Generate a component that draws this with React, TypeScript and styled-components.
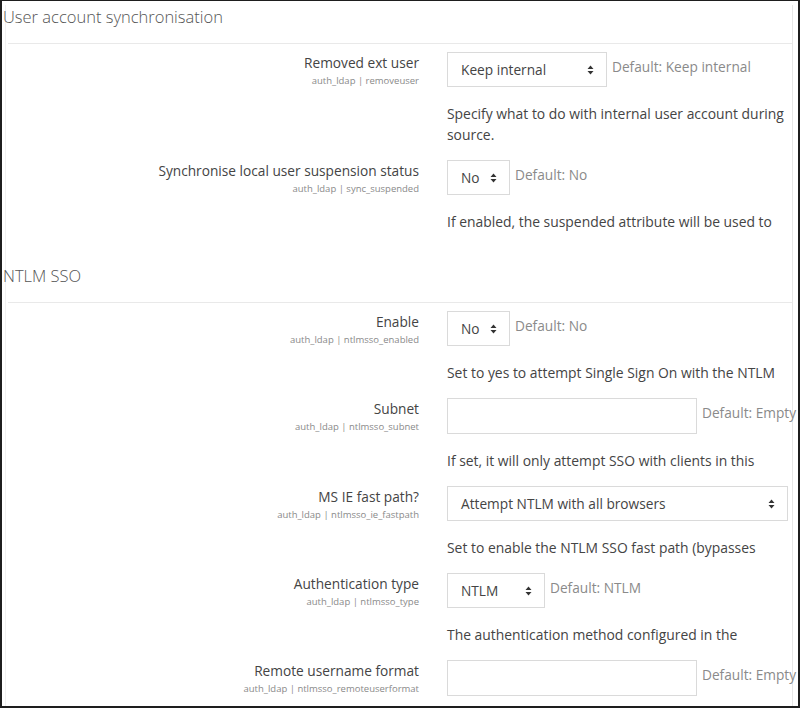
import * as React from 'react'
import styled, { createGlobalStyle } from 'styled-components'

const GlobalStyle = createGlobalStyle`
	html, body {
		margin: 0;
		padding: 0;
		background: #fff;
	}
	body {
		font-family: "Open Sans", "Liberation Sans", sans-serif;
		color: #373a3c;
	}
`

const Frame = styled.div`
	box-sizing: border-box;
	width: 800px;
	height: 708px;
	overflow: hidden;
	border: 2px solid #1e1e1e;
	border-top-width: 1px;
	background: #fff;
`

const Page = styled.div`
	box-sizing: border-box;
	height: 100%;
	margin: 0 5px 0 3px;
	border-left: 1px solid #f1f1f1;
	border-right: 1px solid #e6e6e6;
`

const Heading = styled.h3<{ $first?: boolean }>`
	margin: ${(p) => (p.$first ? '4px' : '17px')} 0 0 -3px;
	padding: 0 0 14px;
	font-size: 16.5px;
	font-weight: 300;
	line-height: 24px;
	color: #555;
	white-space: nowrap;
`

const Rule = styled.div`
	height: 1px;
	margin: 0 0 8px 2px;
	background: #e9e9e9;
`

const Setting = styled.div`
	display: grid;
	grid-template-columns: 413px 1fr;
	column-gap: 28px;
	padding-bottom: 15px;
`

const LabelCell = styled.div`
	text-align: right;
	padding-top: 1px;
`

const Label = styled.div`
	font-size: 13.7px;
	line-height: 20px;
	color: #444;
	white-space: nowrap;
`

const Key = styled.div`
	font-size: 9.5px;
	line-height: 15px;
	color: #8a8a8a;
	white-space: nowrap;
`

const ControlCell = styled.div`
	min-width: 0;
	padding-right: 4px;
`

const ControlLine = styled.div`
	display: flex;
	align-items: flex-start;
	white-space: nowrap;
`

const SelectBox = styled.div<{ $width: number }>`
	box-sizing: border-box;
	flex: none;
	display: flex;
	align-items: center;
	justify-content: space-between;
	width: ${(p) => p.$width}px;
	height: 35px;
	padding: 0 12px 0 13px;
	border: 1px solid #dadada;
	font-size: 13.7px;
	color: #444;
`

const TextBox = styled.div`
	box-sizing: border-box;
	flex: none;
	width: 250px;
	height: 36px;
	border: 1px solid #dadada;
`

const DefaultNote = styled.span`
	margin-left: 5px;
	padding-top: 5px;
	font-size: 13.7px;
	line-height: 20px;
	color: #8a8a8a;
`

const Description = styled.div`
	margin-top: 16px;
	font-size: 13.9px;
	line-height: 21px;
	color: #444;
	white-space: pre-line;
`

const Arrows = () => (
	<svg width="7" height="10" viewBox="0 0 7 10">
		<path d="M3.5 0.5 L6.5 4 H0.5 Z M3.5 9.5 L6.5 6 H0.5 Z" fill="#333" />
	</svg>
)

type Control =
	| { kind: 'select'; value: string; width: number }
	| { kind: 'text' }

interface Item {
	label: string
	name: string
	control: Control
	note?: string
	description: string
}

const userSync: Item[] = [
	{
		label: 'Removed ext user',
		name: 'removeuser',
		control: { kind: 'select', value: 'Keep internal', width: 160 },
		note: 'Default: Keep internal',
		description: 'Specify what to do with internal user account during\nsource.',
	},
	{
		label: 'Synchronise local user suspension status',
		name: 'sync_suspended',
		control: { kind: 'select', value: 'No', width: 63 },
		note: 'Default: No',
		description: 'If enabled, the suspended attribute will be used to',
	},
]

const ntlm: Item[] = [
	{
		label: 'Enable',
		name: 'ntlmsso_enabled',
		control: { kind: 'select', value: 'No', width: 63 },
		note: 'Default: No',
		description: 'Set to yes to attempt Single Sign On with the NTLM',
	},
	{
		label: 'Subnet',
		name: 'ntlmsso_subnet',
		control: { kind: 'text' },
		note: 'Default: Empty',
		description: 'If set, it will only attempt SSO with clients in this',
	},
	{
		label: 'MS IE fast path?',
		name: 'ntlmsso_ie_fastpath',
		control: { kind: 'select', value: 'Attempt NTLM with all browsers', width: 341 },
		description: 'Set to enable the NTLM SSO fast path (bypasses',
	},
	{
		label: 'Authentication type',
		name: 'ntlmsso_type',
		control: { kind: 'select', value: 'NTLM', width: 98 },
		note: 'Default: NTLM',
		description: 'The authentication method configured in the',
	},
	{
		label: 'Remote username format',
		name: 'ntlmsso_remoteuserformat',
		control: { kind: 'text' },
		note: 'Default: Empty',
		description: '',
	},
]

const SettingRow: React.FC<{ item: Item }> = ({ item }) => (
	<Setting>
		<LabelCell>
			<Label>{item.label}</Label>
			<Key>auth_ldap | {item.name}</Key>
		</LabelCell>
		<ControlCell>
			<ControlLine>
				{item.control.kind === 'select' ? (
					<SelectBox $width={item.control.width}>
						<span>{item.control.value}</span>
						<Arrows />
					</SelectBox>
				) : (
					<TextBox />
				)}
				{item.note && <DefaultNote>{item.note}</DefaultNote>}
			</ControlLine>
			{item.description && <Description>{item.description}</Description>}
		</ControlCell>
	</Setting>
)

export default function App() {
	return (
		<>
			<GlobalStyle />
			<Frame>
				<Page>
					<Heading $first>User account synchronisation</Heading>
					<Rule />
					{userSync.map((item) => (
						<SettingRow key={item.name} item={item} />
					))}
					<Heading>NTLM SSO</Heading>
					<Rule />
					{ntlm.map((item) => (
						<SettingRow key={item.name} item={item} />
					))}
				</Page>
			</Frame>
		</>
	)
}
